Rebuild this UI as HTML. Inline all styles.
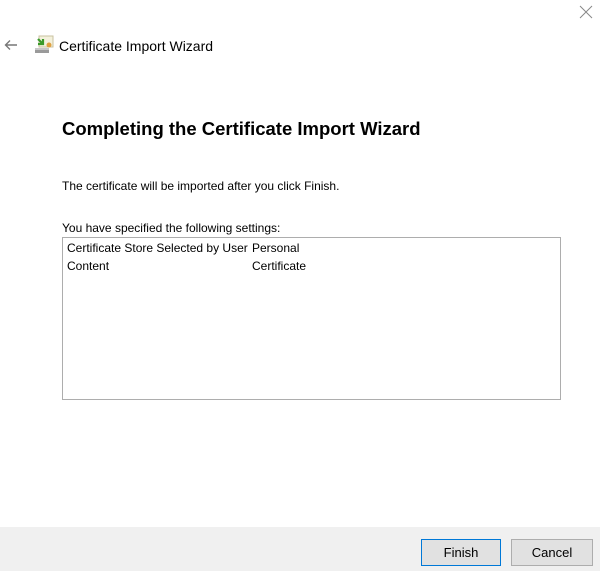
<!DOCTYPE html>
<html><head><meta charset="utf-8">
<style>
html,body{margin:0;padding:0;width:600px;height:571px;background:#fff;overflow:hidden;font-family:"Liberation Sans",sans-serif;color:#000;position:relative}
.abs{position:absolute}
.t{font-size:12px}
</style></head><body>
<svg class="abs" style="left:579px;top:5px" width="14" height="14" viewBox="0 0 14 14"><path d="M1 1L13 13M13 1L1 13" stroke="#888" stroke-width="1"/></svg>
<svg class="abs" style="left:4px;top:39px" width="14" height="12" viewBox="0 0 14 12"><path d="M13 6H2M6 1.5L1.5 6L6 10.5" stroke="#777" stroke-width="1.4" fill="none"/></svg>
<svg class="abs" style="left:33px;top:34px" width="22" height="22" viewBox="0 0 22 22">
<rect x="6" y="2" width="14" height="11" fill="#f4f1dc" stroke="#c9c2a0"/>
<circle cx="16" cy="11" r="2.5" fill="#e0a040"/>
<rect x="2" y="14" width="14" height="5" fill="#9a9a9a"/>
<rect x="2" y="14" width="14" height="2" fill="#c8c8c8"/>
<path d="M5 5L10 10M10 5V10H5" stroke="#3a9a2a" stroke-width="2.2" fill="none"/>
</svg>
<div class="abs" style="left:59px;top:38px;font-size:14px">Certificate Import Wizard</div>
<div class="abs" style="left:62px;top:118px;font-size:18.5px;font-weight:bold">Completing the Certificate Import Wizard</div>
<div class="abs t" style="left:62px;top:179px">The certificate will be imported after you click Finish.</div>
<div class="abs t" style="left:62px;top:221px">You have specified the following settings:</div>
<div class="abs" style="left:62px;top:237px;width:497px;height:161px;border:1px solid #adadad"></div>
<div class="abs t" style="left:67px;top:241px">Certificate Store Selected by User</div>
<div class="abs t" style="left:252px;top:241px">Personal</div>
<div class="abs t" style="left:67px;top:259px">Content</div>
<div class="abs t" style="left:252px;top:259px">Certificate</div>
<div class="abs" style="left:0;top:527px;width:600px;height:44px;background:#f0f0f0"></div>
<div class="abs t" style="left:421px;top:539px;width:78px;height:25px;border:1px solid #0078d7;background:#e1e1e1;text-align:center;line-height:26px;font-size:13px">Finish</div>
<div class="abs t" style="left:511px;top:539px;width:80px;height:25px;border:1px solid #adadad;background:#e1e1e1;text-align:center;line-height:26px;font-size:13px">Cancel</div>
</body></html>
